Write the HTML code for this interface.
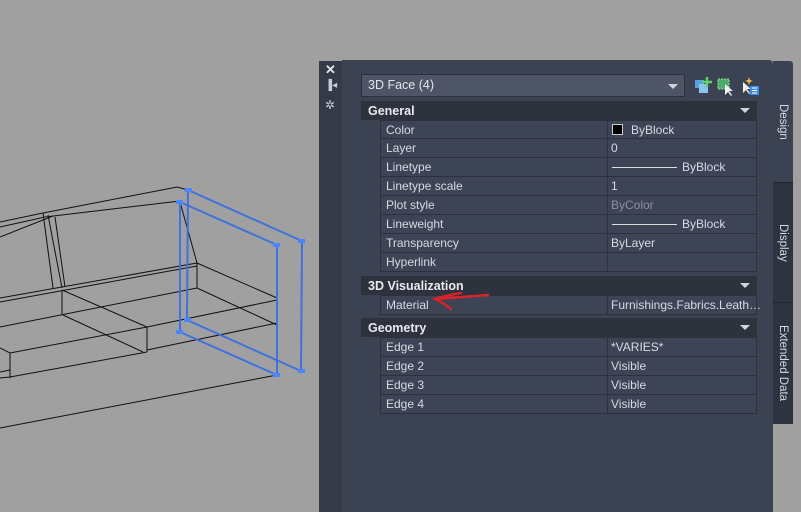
<!DOCTYPE html>
<html><head><style>
body{margin:0;width:801px;height:512px;background:#a0a0a0;position:relative;overflow:hidden;font-family:"Liberation Sans",sans-serif;font-size:12px;color:#d6dae2}
.abs{position:absolute}
.strip{left:319px;top:61px;width:23px;height:451px;background:#343a47}
.main{left:342px;top:60px;width:431px;height:452px;background:#3b4252;border-top-right-radius:4px}
.tab{left:773px;width:20px;color:#d6dae2;writing-mode:vertical-rl;display:flex;align-items:center;justify-content:center;font-size:11.5px;box-sizing:border-box}
.dd{left:361px;top:74px;width:324px;height:23px;background:#4d5567;border:1px solid #2c313c;box-sizing:border-box;padding:3px 0 0 6px;font-size:12.5px;color:#e2e5ea}
.hdr{left:361px;width:396px;height:19px;background:#2d323d;font-weight:bold;color:#e8eaee;padding:3px 0 0 7px;box-sizing:border-box;font-size:12.5px}
.row{left:380px;width:377px;height:19px;border:1px solid #2c313c;border-top:none;box-sizing:border-box;background:#3d4455}
.row span{position:absolute;top:2px}
.l{left:5px}.v{left:230px}
.row .sep{position:absolute;left:226px;top:0;width:1px;height:19px;background:#2c313c}
.ind{left:361px;width:19px;background:#3b4252}
.tri{position:absolute;right:7px;top:7px;border-left:5px solid transparent;border-right:5px solid transparent;border-top:5px solid #d0d4dc}
</style></head><body>
<svg class="abs" style="left:0;top:180px" width="320" height="260" viewBox="0 180 320 260">
<g stroke="#111" stroke-width="1" fill="none">
<path d="M0 222 L43 213 L177 187 L188 190"/>
<path d="M0 227 L45 217 L180 201"/>
<path d="M0 237 L53 216"/>
<path d="M43 213 L53 288 M48 215 L62 288 M55 217 L65 287"/>
<path d="M180 202 L197 263"/>
<path d="M0 298 L197 263 M0 302 L197 266"/>
<path d="M62 290 L62 315 M62 290 L147 327 M63 315 L143 352 M147 327 L147 352"/>
<path d="M197 263 L197 288 M197 263 L277 298 M197 288 L277 325 M147 327 L277 300"/>
<path d="M0 327 L197 288"/>
<path d="M0 348 L10 353 L147 327 M10 353 L10 378 M0 378 L10 377 L147 352 M147 350 L277 323 M0 372 L10 370"/>
<path d="M0 428 L277 375"/>
</g>
<g stroke="#3b6fe0" stroke-width="2" fill="none" opacity="0.95">
<path d="M180 202 L277 245 L277 375 L180 332 Z"/>
<path d="M188 190 L302 241 L301 371 L187 320 Z"/>
</g>
<g fill="#4a86ff"><rect x="176" y="200" width="7" height="4"/><rect x="185" y="188" width="7" height="4"/><rect x="273" y="243" width="7" height="4"/><rect x="298" y="239" width="7" height="4"/><rect x="273" y="373" width="7" height="4"/><rect x="298" y="369" width="7" height="4"/><rect x="176" y="330" width="7" height="4"/><rect x="184" y="318" width="7" height="4"/></g>
</svg>

<div class="abs strip"></div>
<div class="abs main"></div>
<div class="abs" style="left:325px;top:62px;color:#e6e8ec;font-size:13px;font-weight:bold">✕</div>
<div class="abs" style="left:325px;top:80px;color:#c8ccd4;font-size:10px">▐◂</div>
<div class="abs" style="left:325px;top:98px;color:#c8ccd4;font-size:12px">✲</div>

<div class="abs tab" style="top:61px;height:121px;background:#3b4252;border-top-right-radius:3px">Design</div>
<div class="abs tab" style="top:182px;height:120px;background:#2e3340;border-top:1px solid #22262e">Display</div>
<div class="abs tab" style="top:302px;height:122px;background:#2e3340;border-top:1px solid #22262e">Extended Data</div>

<div class="abs dd">3D Face (4)<div class="tri" style="top:9px;right:6px"></div></div>
<svg class="abs" style="left:694px;top:76px" width="70" height="20">
<rect x="1" y="4" width="9" height="8" fill="#5aa0e0"/><rect x="5" y="8" width="9" height="9" fill="#8cc4f0"/><path d="M13 1v10M8 6h10" stroke="#5fd06a" stroke-width="2.5"/>
<rect x="24" y="3" width="11" height="10" fill="#4caa6a" stroke="#8fe09a" stroke-dasharray="2 1"/><path d="M31 8l0 11 3-3 3 4 1-1-3-4 4 0z" fill="#f0f0f0"/>
<path d="M49 6l0 11 3-3 3 4 1-1-3-4 4 0z" fill="#f0f0f0"/><path d="M55 1l1 3 3 1-3 1-1 3-1-3-3-1 3-1z" fill="#f0c040"/><rect x="56" y="10" width="9" height="9" fill="#3a8ee8"/><path d="M58 12h5M58 14.5h5M58 17h5" stroke="#fff"/>
</svg>

<div class="abs hdr" style="top:101px">General<div class="tri"></div></div>
<div class="abs ind" style="top:120px;height:154px"></div>
<div class="abs row" style="top:120px;border-top:1px solid #2c313c"><span class="l">Color</span><div class="sep"></div><span style="left:231px;top:3px;width:11px;height:11px;background:#000;border:1px solid #ccc;box-sizing:border-box"></span><span style="left:250px">ByBlock</span></div>
<div class="abs row" style="top:139px"><span class="l">Layer</span><div class="sep"></div><span class="v">0</span></div>
<div class="abs row" style="top:158px"><span class="l">Linetype</span><div class="sep"></div><span style="left:231px;top:9px;width:65px;height:1px;background:#ddd"></span><span style="left:301px">ByBlock</span></div>
<div class="abs row" style="top:177px"><span class="l">Linetype scale</span><div class="sep"></div><span class="v">1</span></div>
<div class="abs row" style="top:196px"><span class="l">Plot style</span><div class="sep"></div><span class="v" style="color:#8a909c">ByColor</span></div>
<div class="abs row" style="top:215px"><span class="l">Lineweight</span><div class="sep"></div><span style="left:231px;top:9px;width:65px;height:1px;background:#ddd"></span><span style="left:301px">ByBlock</span></div>
<div class="abs row" style="top:234px"><span class="l">Transparency</span><div class="sep"></div><span class="v">ByLayer</span></div>
<div class="abs row" style="top:253px"><span class="l">Hyperlink</span><div class="sep"></div></div>

<div class="abs hdr" style="top:276px">3D Visualization<div class="tri"></div></div>
<div class="abs ind" style="top:295px;height:20px"></div>
<div class="abs row" style="top:295px;border-top:1px solid #2c313c;height:20px"><span class="l">Material</span><div class="sep"></div><span class="v">Furnishings.Fabrics.Leath…</span></div>
<svg class="abs" style="left:430px;top:290px" width="60" height="22"><path d="M31 3 Q18 5 5 9 Q14 13 21 19 M6 9 Q32 7 58 5" stroke="#d8232a" stroke-width="2.5" fill="none" stroke-linecap="round"/></svg>

<div class="abs hdr" style="top:318px">Geometry<div class="tri"></div></div>
<div class="abs ind" style="top:337px;height:77px"></div>
<div class="abs row" style="top:337px;border-top:1px solid #2c313c;height:20px"><span class="l">Edge 1</span><div class="sep"></div><span class="v">*VARIES*</span></div>
<div class="abs row" style="top:357px"><span class="l">Edge 2</span><div class="sep"></div><span class="v">Visible</span></div>
<div class="abs row" style="top:376px"><span class="l">Edge 3</span><div class="sep"></div><span class="v">Visible</span></div>
<div class="abs row" style="top:395px"><span class="l">Edge 4</span><div class="sep"></div><span class="v">Visible</span></div>
</body></html>
